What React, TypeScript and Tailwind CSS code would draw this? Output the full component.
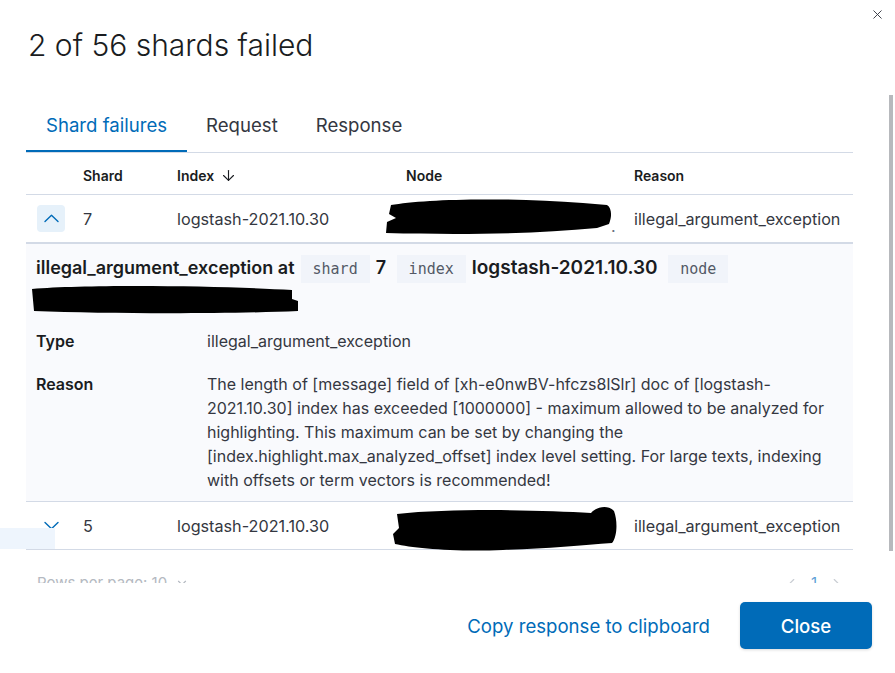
import { ArrowDown, X, ChevronDown, ChevronLeft, ChevronRight } from "lucide-react";

function Blob({ d, w, h, className }: { d: string; w: number; h: number; className: string }) {
  return (
    <svg width={w} height={h} viewBox={`0 0 ${w} ${h}`} className={className}>
      <path d={d} fill="#000" />
    </svg>
  );
}

function Chevron({ up }: { up?: boolean }) {
  return (
    <svg width="15" height="9" viewBox="0 0 15 9" fill="none">
      <polyline
        points={up ? "1,7.5 7.5,1.2 14,7.5" : "1,1.5 7.5,7.8 14,1.5"}
        stroke="#006bb8"
        strokeWidth="1.4"
        strokeLinejoin="round"
        strokeLinecap="round"
      />
    </svg>
  );
}

function Code({ children }: { children: string }) {
  return (
    <span className="inline-block h-[28px] px-[12px] mx-[6px] bg-[#f1f4fa] text-[#535966] font-['DejaVu_Sans_Mono',monospace] text-[15px] font-normal leading-[28px] align-middle">
      {children}
    </span>
  );
}

export default function App() {
  const reasonLines = [
    "The length of [message] field of [xh-e0nwBV-hfczs8lSlr] doc of [logstash-",
    "2021.10.30] index has exceeded [1000000] - maximum allowed to be analyzed for",
    "highlighting. This maximum can be set by changing the",
    "[index.highlight.max_analyzed_offset] index level setting. For large texts, indexing",
    "with offsets or term vectors is recommended!",
  ];

  return (
    <div className="relative w-[895px] h-[673px] bg-white overflow-hidden font-['Inter',sans-serif] text-[#343741]">
      <button className="absolute right-[8px] top-[5px] p-[2px] text-[#343741]">
        <X size={15} strokeWidth={1.5} />
      </button>

      <div className="h-[88px] pt-[27px] px-[28px]">
        <h1 className="text-[30px] leading-[36px] font-light text-[#1a1c21]">2 of 56 shards failed</h1>
      </div>

      <div className="relative h-[495px] overflow-hidden pl-[26px] pr-[42px] pt-[12px]">
        <div className="absolute right-[2px] top-[7px] w-[4px] h-[456px] bg-[#b7b9bd]" />
        <div className="absolute left-0 top-[440px] w-[55px] h-[21px] bg-[#eef5fd]" />

        {/* tabs */}
        <div className="flex border-b border-[#d3dae6] text-[18.6px]">
          <div className="h-[52px] pt-[2px] px-[20px] flex items-center border-b-2 border-[#006bb8] text-[#006bb8]">Shard failures</div>
          <div className="h-[52px] pt-[2px] px-[19px] flex items-center border-b-2 border-transparent text-[#343741]">Request</div>
          <div className="h-[52px] pt-[2px] px-[19px] flex items-center border-b-2 border-transparent text-[#343741]">Response</div>
        </div>

        {/* table header */}
        <div className="flex h-[42px] pt-[3px] items-center border-b border-[#d3dae6] text-[14px] font-semibold text-[#1a1c21]">
          <div className="w-[49px]" />
          <div className="w-[94px] px-[8px]">Shard</div>
          <div className="w-[229px] px-[8px] flex items-center gap-[6px]">
            Index <ArrowDown size={17} strokeWidth={1.6} />
          </div>
          <div className="w-[228px] px-[8px]">Node</div>
          <div className="flex-1 px-[8px]">Reason</div>
        </div>

        {/* row 1 */}
        <div className="flex h-[49px] items-center border-b-2 border-[#d3dae6] text-[16.2px]">
          <div className="w-[49px] flex justify-center pl-[1px]">
            <div className="w-[28px] h-[27px] rounded-[4px] bg-[#e6f1fa] flex items-center justify-center">
              <Chevron up />
            </div>
          </div>
          <div className="w-[94px] px-[8px] pt-[2px]">7</div>
          <div className="w-[229px] px-[8px] pt-[2px]">logstash-2021.10.30</div>
          <div className="relative w-[228px] h-full px-[8px]">
            <Blob
              w={232}
              h={38}
              className="absolute left-[-15px] top-[2px]"
              d="M8 8 C40 2 120 0 200 6 L224 8 C229 11 229 20 226 27 L214 31 C150 37 80 38 3 36 L4 25 L13 21 L6 17 Z"
            />
            <span className="absolute left-[213px] top-[19px] text-[#69707d]">.</span>
          </div>
          <div className="flex-1 px-[8px] pt-[2px]">illegal_argument_exception</div>
        </div>

        {/* expanded detail */}
        <div className="bg-[#f9fafd] border-b border-[#d3dae6] pl-[10px] pr-[8px] pt-[10px] pb-[9px]">
          <div className="text-[18px] font-semibold text-[#1a1c21] leading-[28px]">
            illegal_argument_exception at<Code>shard</Code>7{" "}
            <Code>index</Code>
            <span className="text-[19px]">logstash-2021.10.30</span>{" "}
            <Code>node</Code>
          </div>
          <div className="h-[30px] relative">
            <Blob
              w={270}
              h={30}
              className="absolute left-[-6px] top-[1px]"
              d="M2 5 C60 0 200 2 262 6 L262 15 L268 17 L268 27 C200 30 80 30 4 27 Z"
            />
          </div>
          <div className="mt-[16px] flex text-[16px] leading-[24px]">
            <div className="w-[171px] font-semibold text-[#1a1c21]">Type</div>
            <div>illegal_argument_exception</div>
          </div>
          <div className="mt-[19px] flex text-[16px] leading-[24px]">
            <div className="w-[171px] font-semibold text-[#1a1c21]">Reason</div>
            <div>
              {reasonLines.map((l) => (
                <div key={l} className="whitespace-nowrap">{l}</div>
              ))}
            </div>
          </div>
        </div>

        {/* row 2 */}
        <div className="flex h-[48px] items-center border-b border-[#d3dae6] text-[16.2px]">
          <div className="w-[49px] flex justify-center pl-[1px]">
            <Chevron />
          </div>
          <div className="w-[94px] px-[8px] pt-[2px]">5</div>
          <div className="w-[229px] px-[8px] pt-[2px]">logstash-2021.10.30</div>
          <div className="relative w-[228px] h-full px-[8px]">
            <Blob
              w={226}
              h={48}
              className="absolute left-[-5px] top-[2px]"
              d="M4 10 C60 4 150 6 198 9 C204 2 216 1 221 7 C225 18 224 33 219 39 C190 41 150 45 110 46 C60 48 20 44 2 40 L0 30 L6 24 Z"
            />
          </div>
          <div className="flex-1 px-[8px] pt-[2px]">illegal_argument_exception</div>
        </div>

        {/* pagination (clipped by footer) */}
        <div className="mt-[22px] flex items-center justify-between pl-[11px] pr-[10px] text-[15px] text-[#b4b9c1]">
          <div className="flex items-center gap-[8px]">
            Rows per page: 10 <ChevronDown size={14} />
          </div>
          <div className="flex items-center gap-[12px]">
            <ChevronLeft size={14} className="text-[#c9cdd3]" />
            <span className="text-[#5e9fd6]">1</span>
            <ChevronRight size={14} className="text-[#c9cdd3]" />
          </div>
        </div>
      </div>

      {/* footer */}
      <div className="flex justify-end items-center gap-[30px] pt-[19px] pr-[23px]">
        <button className="pt-[3px] text-[18.6px] text-[#006bb8]">Copy response to clipboard</button>
        <button className="w-[132px] h-[47px] pt-[2px] rounded-[5px] bg-[#006bb8] text-white text-[18.6px] font-medium shadow-[0_1px_3px_rgba(0,0,0,0.15)]">
          Close
        </button>
      </div>
    </div>
  );
}
